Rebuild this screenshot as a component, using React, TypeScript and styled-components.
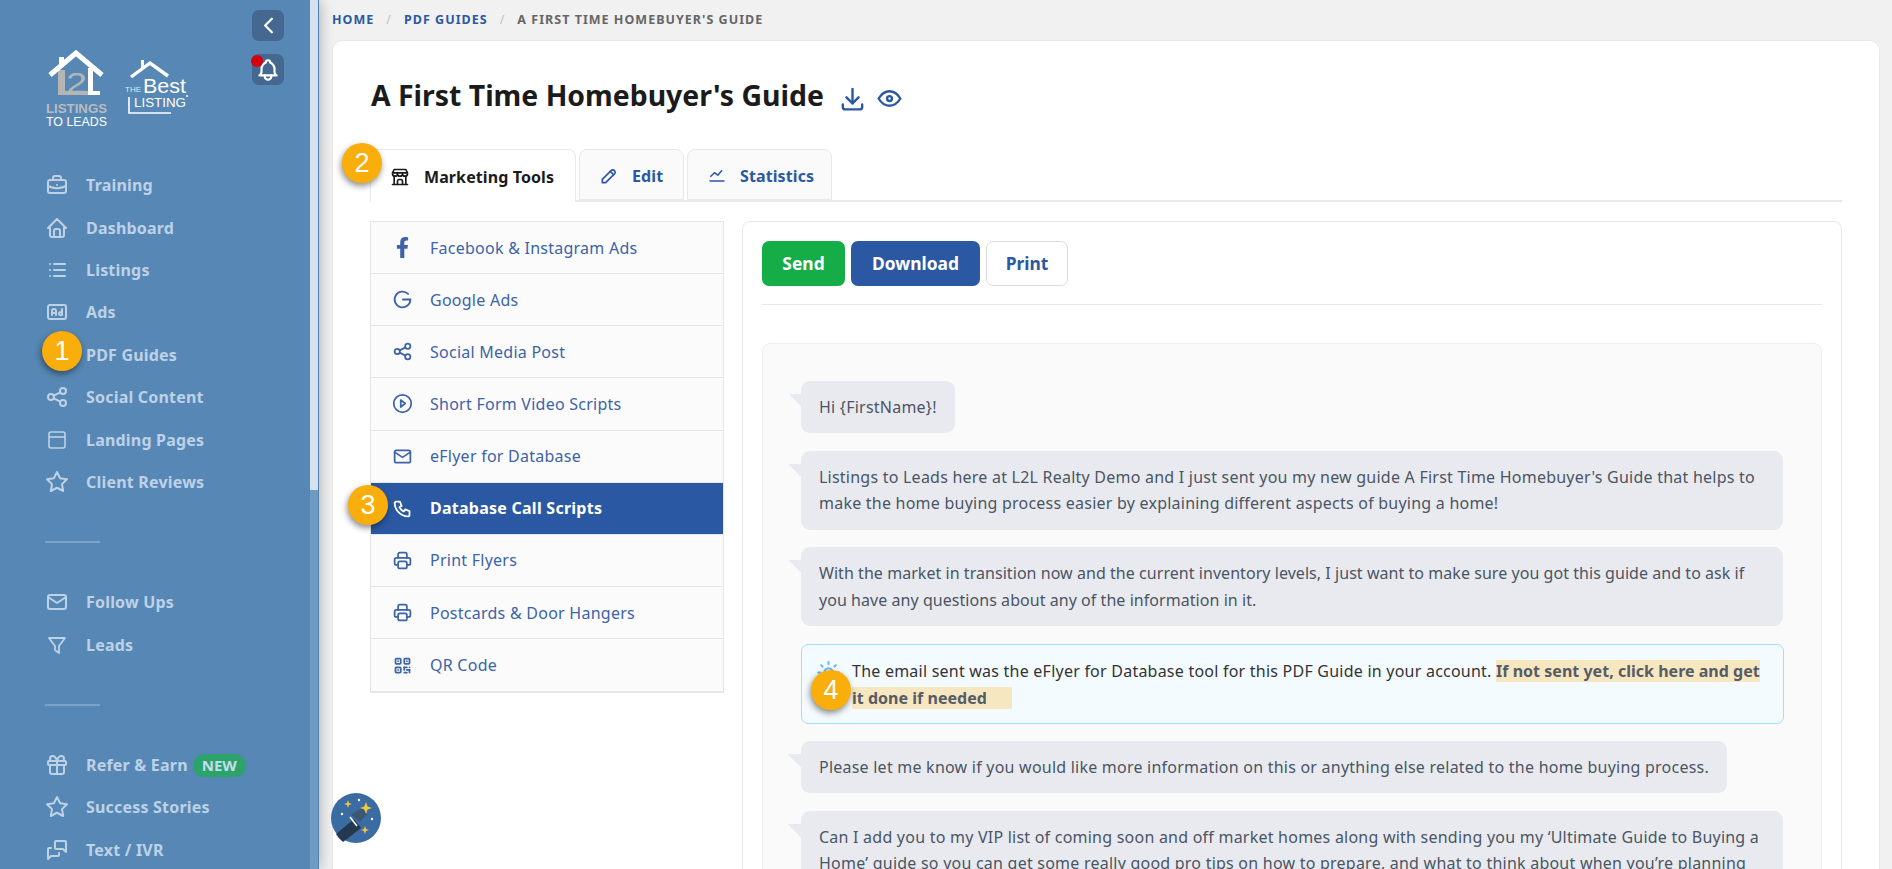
import React from "react";
import styled, { createGlobalStyle } from "styled-components";
import { FaFacebookF } from "react-icons/fa";
import {
  TbBriefcase, TbHome, TbList, TbAd, TbFileText, TbShare, TbStar, TbMail, TbGift, TbMessages,
  TbChevronLeft, TbBell, TbDownload, TbEye, TbBuildingStore, TbPencil,
  TbPhone, TbPrinter, TbQrcode, TbSunHigh,
} from "react-icons/tb";

const Global = createGlobalStyle`
  html, body { margin: 0; padding: 0; height: 100%; overflow: hidden; background: #f1f1f1; }
  body { font-family: "Noto Sans", "Open Sans", sans-serif; }
  * { box-sizing: border-box; }
`;

const Page = styled.div`
  position: relative;
  display: flex;
  width: 1892px;
  height: 869px;
  overflow: hidden;
  background: #f1f1f1;
`;

const Sidebar = styled.aside`
  display: flex;
  flex: 0 0 319px;
  height: 100%;
  background: #5787b4;
  border-right: 1px solid #4f80b0;
  box-shadow: 0 0 14px rgba(0, 0, 0, 0.32);
  z-index: 2;
`;

const SideBody = styled.div`
  flex: 1;
  display: flex;
  flex-direction: column;
  min-width: 0;
  overflow: hidden;
`;

const Rail = styled.div`
  flex: 0 0 8px;
  display: flex;
  flex-direction: column;
  background: #6f9bc3;
`;

const RailThumb = styled.div`
  height: 490px;
  background: #d4e1ee;
`;

const SideHead = styled.div`
  display: flex;
  justify-content: space-between;
  flex: 0 0 164px;
  padding: 10px 26px 0 45px;
`;

const Logos = styled.div`
  display: flex;
  align-items: flex-start;
  gap: 16px;
  padding-top: 40px;
`;

const BestWrap = styled.div`
  display: flex;
  margin-top: 10px;
`;

const HeadButtons = styled.div`
  display: flex;
  flex-direction: column;
  gap: 13px;
`;

const HeadButton = styled.div`
  position: relative;
  width: 32px;
  height: 31px;
  border-radius: 7px;
  background: #44688f;
  color: #fff;
  display: flex;
  align-items: center;
  justify-content: center;
`;

const RedDot = styled.span`
  position: absolute;
  left: -1px;
  top: 1px;
  width: 12px;
  height: 12px;
  border-radius: 50%;
  background: #d40010;
`;

const Nav = styled.nav`
  display: flex;
  flex-direction: column;
  flex-shrink: 0;
`;

const NavItem = styled.div`
  display: flex;
  align-items: center;
  flex: 0 0 42.4px;
  padding-left: 45px;
  color: #bdd2e7;
  font-size: 16px;
  font-weight: 700;
  letter-spacing: 0.2px;
  white-space: nowrap;
`;

const NavIcon = styled.span`
  flex: 0 0 41px;
  display: flex;
  font-size: 24px;
`;

const NewPill = styled.span`
  margin-left: 5px;
  width: 53px;
  height: 23px;
  line-height: 23px;
  text-align: center;
  border-radius: 12px;
  background: #2ba36b;
  color: #c6dcec;
  font-size: 15px;
  letter-spacing: 0;
`;

const SideRule = styled.div`
  flex-shrink: 0;
  width: 55px;
  height: 2px;
  margin: 38px 0 38px 45px;
  background: #7ba3c9;
`;

const Main = styled.main`
  flex: 1;
  min-width: 0;
  display: flex;
  flex-direction: column;
  padding: 0 12px 0 13px;
`;

const Crumbs = styled.div`
  flex: 0 0 40px;
  display: flex;
  align-items: center;
  padding-bottom: 2px;
  font-size: 12.5px;
  font-weight: 700;
  letter-spacing: 1.02px;
  text-transform: uppercase;
  color: #666;
`;

const CrumbLink = styled.span`
  color: #2b58a3;
`;

const CrumbSep = styled.span`
  margin: 0 12px;
  color: #c0c0c0;
  font-weight: 400;
`;

const Card = styled.section`
  flex: 1;
  padding: 0 37px;
  background: #fff;
  border: 1px solid #e8e8e8;
  border-bottom: 0;
  border-radius: 10px 10px 0 0;
  min-height: 0;
`;

const TitleRow = styled.div`
  display: flex;
  align-items: center;
  height: 108px;
  padding-left: 1px;
  gap: 14px;
`;

const Title = styled.h1`
  margin: 0;
  font-size: 28.4px;
  font-weight: 700;
  color: #1b1b1b;
`;

const TitleIcons = styled.div`
  display: flex;
  align-items: center;
  gap: 8px;
  margin-top: 7px;
  color: #2b58a3;
  font-size: 29px;
`;

const Tabs = styled.div`
  display: flex;
  height: 53px;
  gap: 3px;
  border-bottom: 2px solid #e9e9e9;
`;

const Tab = styled.div<{ $active?: boolean; $w: number }>`
  display: flex;
  align-items: center;
  gap: ${(p) => (p.$active ? "14px" : "13px")};
  width: ${(p) => p.$w}px;
  height: ${(p) => (p.$active ? "53px" : "51px")};
  padding: 2px 0 0 19px;
  border: 1px solid #e9e9e9;
  border-bottom: ${(p) => (p.$active ? "0" : "1px solid #e9e9e9")};
  border-radius: 8px 8px 0 0;
  background: ${(p) => (p.$active ? "#fff" : "#fafafa")};
  color: ${(p) => (p.$active ? "#1b1b1b" : "#2b58a3")};
  font-size: 16px;
  font-weight: 700;
  letter-spacing: 0.1px;
  svg { font-size: 20px; }
`;

const Content = styled.div`
  display: grid;
  grid-template-columns: 354px 1100px;
  gap: 18px;
  margin-top: 19px;
  align-items: start;
`;

const ToolList = styled.div`
  display: flex;
  flex-direction: column;
  border: 1px solid #e6e6e6;
  border-bottom-width: 2px;
`;

const ToolRow = styled.div<{ $active?: boolean }>`
  display: flex;
  align-items: center;
  height: 52.15px;
  padding-left: 21px;
  background: ${(p) => (p.$active ? "#2b58a3" : "#fbfbfb")};
  color: ${(p) => (p.$active ? "#fff" : "#3d63a8")};
  font-weight: ${(p) => (p.$active ? 700 : 400)};
  font-size: 16px;
  letter-spacing: 0.25px;
  border-bottom: 1px solid #e6e6e6;
  &:last-child { border-bottom: 0; }
`;

const ToolIcon = styled.span`
  flex: 0 0 38px;
  display: flex;
  font-size: 21px;
`;

const Panel = styled.div`
  padding: 19px 19px 0;
  height: 700px;
  border: 1px solid #e8e8e8;
  border-radius: 8px 8px 0 0;
  background: #fff;
`;

const Buttons = styled.div`
  display: flex;
  gap: 6px;
  padding-bottom: 18px;
  border-bottom: 1px solid #e8e8e8;
`;

const Btn = styled.div<{ $bg: string; $fg: string; $w: number; $line?: boolean }>`
  width: ${(p) => p.$w}px;
  height: 45px;
  padding-bottom: 2px;
  display: flex;
  align-items: center;
  justify-content: center;
  border-radius: 7px;
  background: ${(p) => p.$bg};
  color: ${(p) => p.$fg};
  border: ${(p) => (p.$line ? "1px solid #dcdcdc" : "0")};
  font-size: 17.4px;
  font-weight: 700;
`;

const Chat = styled.div`
  display: flex;
  flex-direction: column;
  align-items: flex-start;
  gap: 17.5px;
  margin-top: 38px;
  padding: 37px 38px 0;
  height: 600px;
  background: #fafafa;
  border: 1px solid #eeeeee;
  border-radius: 8px 8px 0 0;
`;

const Bubble = styled.div<{ $track?: number }>`
  position: relative;
  padding: 13px 18px;
  border-radius: 9px;
  background: #e8eaef;
  color: #4b5563;
  font-size: 16px;
  line-height: 26.4px;
  letter-spacing: ${(p) => p.$track ?? 0.23}px;
  &::before {
    content: "";
    position: absolute;
    left: -13px;
    top: 13px;
    width: 13px;
    height: 13px;
    background: linear-gradient(to top right, transparent 50%, #e8eaef 50%);
  }
`;

const Tip = styled.div`
  position: relative;
  width: 983px;
  padding: 13px 18px 10px 50px;
  border: 1px solid #a5dcff;
  border-radius: 7px;
  background: #f4fbff;
  color: #333;
  font-size: 16px;
  line-height: 27.5px;
  letter-spacing: 0.23px;
`;

const TipSun = styled.span`
  position: absolute;
  left: 14px;
  top: 15px;
  display: flex;
  color: #6cb8ee;
  font-size: 25px;
`;

const Mark = styled.span`
  background: #f7e7c1;
  color: #555c66;
  font-weight: 700;
  letter-spacing: 0.02px;
`;

const Pin = styled.div<{ $x: number; $y: number }>`
  position: absolute;
  left: ${(p) => p.$x - 20}px;
  top: ${(p) => p.$y - 20}px;
  width: 40px;
  height: 40px;
  border-radius: 50%;
  background: #f9ae0b;
  color: #fff;
  display: flex;
  align-items: center;
  justify-content: center;
  font-family: "Liberation Sans", sans-serif;
  font-size: 27px;
  box-shadow: -1px 3px 6px rgba(0, 0, 0, 0.45);
  z-index: 5;
`;

const Wand = styled.div`
  position: absolute;
  left: 331px;
  top: 793px;
  width: 50px;
  height: 50px;
  z-index: 4;
  display: flex;
`;

const L2Logo = () => (
  <svg width="64" height="80" viewBox="0 0 64 80">
    <rect x="13" y="20" width="7" height="25" fill="#b5b5b5" />
    <rect x="13" y="41" width="30" height="4" fill="#b5b5b5" />
    <text x="21" y="43" fontFamily="Liberation Sans" fontSize="29" textLength="21" lengthAdjust="spacingAndGlyphs" fill="#b5b5b5">2</text>
    <rect x="43" y="41" width="12" height="4" fill="#fff" />
    <rect x="43" y="18" width="5" height="27" fill="#fff" />
    <rect x="14" y="7" width="5" height="10" fill="#fff" />
    <polyline points="5,25 31,3 57,25" fill="none" stroke="#fff" strokeWidth="5" />
    <text x="1" y="63" textLength="61" lengthAdjust="spacingAndGlyphs" fontFamily="Liberation Sans" fontWeight="700" fontSize="13.5" fill="#b9bcc0">LISTINGS</text>
    <text x="1" y="76" textLength="61" lengthAdjust="spacingAndGlyphs" fontFamily="Liberation Sans" fontSize="13.5" fill="#fff">TO LEADS</text>
  </svg>
);

const BestLogo = () => (
  <svg width="66" height="56" viewBox="0 0 66 56">
    <rect x="16" y="0" width="3" height="9" fill="#fff" />
    <polyline points="6,17 25,3 43,16" fill="none" stroke="#fff" strokeWidth="3.4" />
    <text x="0" y="32" fontFamily="Liberation Sans" fontSize="8" fill="#dfe9f3">THE</text>
    <text x="18" y="33" textLength="43" lengthAdjust="spacingAndGlyphs" fontFamily="Liberation Sans" fontSize="21" fill="#fff">Best</text>
    <polyline points="4,37 4,53 46,53" fill="none" stroke="#fff" strokeWidth="1.6" />
    <text x="9" y="47" textLength="52" lengthAdjust="spacingAndGlyphs" fontFamily="Liberation Sans" fontSize="12.5" fill="#fff">LISTING</text>
    <circle cx="62" cy="36" r="1" fill="#fff" />
  </svg>
);

const AppWindow = () => (
  <svg width="24" height="24" viewBox="0 0 24 24" fill="none" stroke="currentColor" strokeWidth="1.6">
    <rect x="4" y="4" width="16" height="16" rx="2" />
    <line x1="4" y1="9" x2="20" y2="9" />
  </svg>
);

const Funnel = () => (
  <svg width="24" height="24" viewBox="0 0 24 24" fill="none" stroke="currentColor" strokeWidth="1.8" strokeLinejoin="round">
    <path d="M4 5h16l-6 8v7l-4-3v-4z" />
  </svg>
);

const GoogleG = () => (
  <svg width="21" height="21" viewBox="0 0 24 24" fill="none" stroke="currentColor" strokeWidth="2.1" strokeLinecap="round">
    <path d="M12.5 12H21a9 9 0 1 1-2.6-6.4" />
  </svg>
);

const PlayCircle = () => (
  <svg width="21" height="21" viewBox="0 0 24 24" fill="none" stroke="currentColor" strokeWidth="2" strokeLinejoin="round">
    <circle cx="12" cy="12" r="10" />
    <path d="M10 8l5 4-5 4z" />
  </svg>
);

const StatIcon = () => (
  <svg width="20" height="20" viewBox="0 0 24 24" fill="none" stroke="currentColor" strokeWidth="1.8" strokeLinejoin="round">
    <path d="M4 13l5-5 4 3 5-6" />
    <path d="M3 18h18" />
  </svg>
);

const WandArt = () => (
  <svg width="50" height="50" viewBox="0 0 50 50">
    <circle cx="25" cy="25" r="25" fill="#3a6ca3" />
    <path d="M5 41l18-15 7 9-18 14a25 25 0 0 1-7-8z" fill="#24384f" />
    <path d="M20 22l9-6a3 3 0 0 1 4 .5l2 3a3 3 0 0 1-1 4l-5 5z" fill="#3e566f" />
    <path d="M19 24l7 9" stroke="#fff" strokeWidth="1.6" />
    <path d="M35 9l1.6 4.4L41 15l-4.4 1.6L35 21l-1.6-4.4L29 15l4.4-1.6z" fill="#f3c63f" />
    <path d="M17 7l1 3 3 1-3 1-1 3-1-3-3-1 3-1z" fill="#f3c63f" />
    <path d="M34 33l1.1 2.9L38 37l-2.9 1.1L34 41l-1.1-2.9L30 37l2.9-1.1z" fill="#f3c63f" />
    <circle cx="28" cy="7" r="1.2" fill="#fff" />
    <circle cx="11" cy="21" r="1.2" fill="#fff" />
    <circle cx="41" cy="26" r="1.2" fill="#fff" />
  </svg>
);

const topNav = [
  { icon: <TbBriefcase />, label: "Training" },
  { icon: <TbHome />, label: "Dashboard" },
  { icon: <TbList />, label: "Listings" },
  { icon: <TbAd />, label: "Ads" },
  { icon: <TbFileText />, label: "PDF Guides" },
  { icon: <TbShare />, label: "Social Content" },
  { icon: <AppWindow />, label: "Landing Pages" },
  { icon: <TbStar />, label: "Client Reviews" },
];

const tools = [
  { icon: <FaFacebookF />, label: "Facebook & Instagram Ads" },
  { icon: <GoogleG />, label: "Google Ads" },
  { icon: <TbShare />, label: "Social Media Post" },
  { icon: <PlayCircle />, label: "Short Form Video Scripts" },
  { icon: <TbMail />, label: "eFlyer for Database" },
  { icon: <TbPhone />, label: "Database Call Scripts", active: true },
  { icon: <TbPrinter />, label: "Print Flyers" },
  { icon: <TbPrinter />, label: "Postcards & Door Hangers" },
  { icon: <TbQrcode />, label: "QR Code" },
];

export default function App() {
  return (
    <Page>
      <Global />
      <Sidebar>
        <SideBody>
          <SideHead>
            <Logos>
              <L2Logo />
              <BestWrap><BestLogo /></BestWrap>
            </Logos>
            <HeadButtons>
              <HeadButton><TbChevronLeft size={27} /></HeadButton>
              <HeadButton><RedDot /><TbBell size={26} /></HeadButton>
            </HeadButtons>
          </SideHead>
          <Nav>
            {topNav.map((n) => (
              <NavItem key={n.label}><NavIcon>{n.icon}</NavIcon>{n.label}</NavItem>
            ))}
          </Nav>
          <SideRule />
          <Nav>
            <NavItem><NavIcon><TbMail /></NavIcon>Follow Ups</NavItem>
            <NavItem><NavIcon><Funnel /></NavIcon>Leads</NavItem>
          </Nav>
          <SideRule />
          <Nav>
            <NavItem><NavIcon><TbGift /></NavIcon>Refer &amp; Earn<NewPill>NEW</NewPill></NavItem>
            <NavItem><NavIcon><TbStar /></NavIcon>Success Stories</NavItem>
            <NavItem><NavIcon><TbMessages /></NavIcon>Text / IVR</NavItem>
          </Nav>
        </SideBody>
        <Rail><RailThumb /></Rail>
      </Sidebar>

      <Main>
        <Crumbs>
          <CrumbLink>Home</CrumbLink>
          <CrumbSep>/</CrumbSep>
          <CrumbLink>PDF Guides</CrumbLink>
          <CrumbSep>/</CrumbSep>
          <span>A First Time Homebuyer's Guide</span>
        </Crumbs>
        <Card>
          <TitleRow>
            <Title>A First Time Homebuyer's Guide</Title>
            <TitleIcons><TbDownload /><TbEye /></TitleIcons>
          </TitleRow>
          <Tabs>
            <Tab $active $w={206}><TbBuildingStore />Marketing Tools</Tab>
            <Tab $w={105}><TbPencil />Edit</Tab>
            <Tab $w={145}><StatIcon />Statistics</Tab>
          </Tabs>
          <Content>
            <ToolList>
              {tools.map((t) => (
                <ToolRow key={t.label} $active={t.active}>
                  <ToolIcon>{t.icon}</ToolIcon>{t.label}
                </ToolRow>
              ))}
            </ToolList>
            <Panel>
              <Buttons>
                <Btn $w={83} $bg="#15ad47" $fg="#fff">Send</Btn>
                <Btn $w={129} $bg="#2b58a3" $fg="#fff">Download</Btn>
                <Btn $w={82} $bg="#fff" $fg="#2b58a3" $line>Print</Btn>
              </Buttons>
              <Chat>
                <Bubble>Hi {"{FirstName}"}!</Bubble>
                <Bubble>Listings to Leads here at L2L Realty Demo and I just sent you my new guide A First Time Homebuyer's Guide that helps to make the home buying process easier by explaining different aspects of buying a home!</Bubble>
                <Bubble $track={0.05}>With the market in transition now and the current inventory levels, I just want to make sure you got this guide and to ask if you have any questions about any of the information in it.</Bubble>
                <Tip>
                  <TipSun><TbSunHigh /></TipSun>
                  The email sent was the eFlyer for Database tool for this PDF Guide in your account. <Mark>If not sent yet, click here and get it done if needed&nbsp;&nbsp;&nbsp;&nbsp;&nbsp;&nbsp;</Mark>
                </Tip>
                <Bubble>Please let me know if you would like more information on this or anything else related to the home buying process.</Bubble>
                <Bubble>Can I add you to my VIP list of coming soon and off market homes along with sending you my ‘Ultimate Guide to Buying a Home’ guide so you can get some really good pro tips on how to prepare, and what to think about when you’re planning to buy a home?</Bubble>
              </Chat>
            </Panel>
          </Content>
        </Card>
      </Main>

      <Pin $x={62} $y={351}>1</Pin>
      <Pin $x={362} $y={163}>2</Pin>
      <Pin $x={368} $y={505}>3</Pin>
      <Pin $x={831} $y={690}>4</Pin>
      <Wand><WandArt /></Wand>
    </Page>
  );
}
